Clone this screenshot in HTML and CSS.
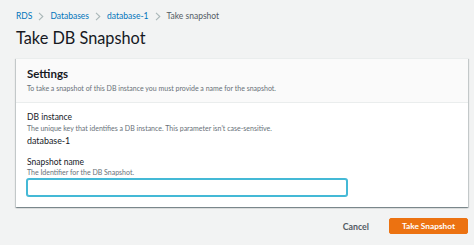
FILE: index.html
```html
<!DOCTYPE html>
<html>
<head>
<meta charset="utf-8">
<link rel="stylesheet" href="styles.css">
</head>
<body>
<div class="page">
  <nav class="crumbs">
    <a class="crumb-link">RDS</a>
    <span class="sep"><svg width="6" height="9" viewBox="0 0 6 9"><path d="M1 0.8 L4.8 4.5 L1 8.2" fill="none" stroke="#aab7b8" stroke-width="1.1"/></svg></span>
    <a class="crumb-link">Databases</a>
    <span class="sep"><svg width="6" height="9" viewBox="0 0 6 9"><path d="M1 0.8 L4.8 4.5 L1 8.2" fill="none" stroke="#aab7b8" stroke-width="1.1"/></svg></span>
    <a class="crumb-link">database-1</a>
    <span class="sep"><svg width="6" height="9" viewBox="0 0 6 9"><path d="M1 0.8 L4.8 4.5 L1 8.2" fill="none" stroke="#aab7b8" stroke-width="1.1"/></svg></span>
    <span class="crumb-current">Take snapshot</span>
  </nav>
  <h1 class="title">Take DB Snapshot</h1>
  <section class="panel">
    <header class="panel-head">
      <h2 class="panel-title">Settings</h2>
      <p class="panel-desc">To take a snapshot of this DB instance you must provide a name for the snapshot.</p>
    </header>
    <div class="panel-body">
      <div class="field">
        <div class="label">DB instance</div>
        <div class="hint">The unique key that identifies a DB instance. This parameter isn't case-sensitive.</div>
        <div class="value">database-1</div>
      </div>
      <div class="field field-2">
        <div class="label">Snapshot name</div>
        <div class="hint hint-small">The Identifier for the DB Snapshot.</div>
        <input class="input" type="text">
      </div>
    </div>
  </section>
  <div class="actions">
    <button class="btn-link">Cancel</button>
    <button class="btn-primary">Take Snapshot</button>
  </div>
</div>
</body>
</html>
```
FILE: styles.css
```css
* { box-sizing: border-box; }
html, body { margin: 0; padding: 0; }
body {
  background: #f2f3f3;
  font-family: "Lato", "Open Sans", sans-serif;
  color: #16191f;
  width: 474px;
  height: 245px;
  overflow: hidden;
}
.page { padding: 9px 6px 0 16px; }
.crumbs {
  display: flex;
  align-items: center;
  gap: 4px;
  font-size: 8.5px;
  height: 14px;
  line-height: 14px;
}
.crumb-link { color: #0073bb; }
.crumb-current { color: #545b64; }
.sep { display: flex; align-items: center; margin: 0 2px; }
.title {
  margin: 4px 0 0 0;
  font-size: 16.3px;
  font-weight: 400;
  line-height: 22px;
}
.panel {
  margin-top: 9px;
  background: #fff;
  box-shadow: 0 1px 1px 0 rgba(0,28,36,0.3), 1px 1px 1px 0 rgba(0,28,36,0.15), -1px 1px 1px 0 rgba(0,28,36,0.15);
  border-top: 1px solid #eaeded;
}
.panel-head {
  background: #fafafa;
  border-bottom: 1px solid #eaeded;
  padding: 8px 11px 9px 11px;
}
.panel-title {
  margin: 0;
  font-size: 11.5px;
  font-weight: 700;
  line-height: 14px;
}
.panel-desc {
  margin: 2px 0 0 0;
  font-size: 7px;
  color: #687078;
  line-height: 10px;
}
.panel-body { padding: 8px 11px 11px 11px; }
.label { font-size: 8.5px; line-height: 12px; color: #16191f; }
.hint { font-size: 7px; line-height: 10px; color: #687078; }
.hint-small { line-height: 8px; }
.value { font-size: 8.9px; line-height: 12px; margin-top: 2px; color: #16191f; }
.field-2 { margin-top: 9px; }
.input {
  display: block;
  margin-top: 3px;
  width: 320px;
  height: 17px;
  border: 1px solid #44b9d6;
  box-shadow: 0 0 0 1px #44b9d6;
  border-radius: 2px;
  background: #fff;
  outline: none;
}
.actions {
  display: flex;
  justify-content: flex-end;
  align-items: center;
  gap: 20px;
  margin-top: 11px;
}
.btn-link {
  background: none;
  border: none;
  font-family: inherit;
  font-size: 8.8px;
  font-weight: 700;
  color: #545b64;
  padding: 0;
}
.btn-primary {
  background: #ec7211;
  border: 1px solid #ec7211;
  color: #fff;
  font-family: inherit;
  font-size: 8.3px;
  font-weight: 700;
  height: 16px;
  width: 79px;
  padding: 0;
  border-radius: 2px;
}
```
